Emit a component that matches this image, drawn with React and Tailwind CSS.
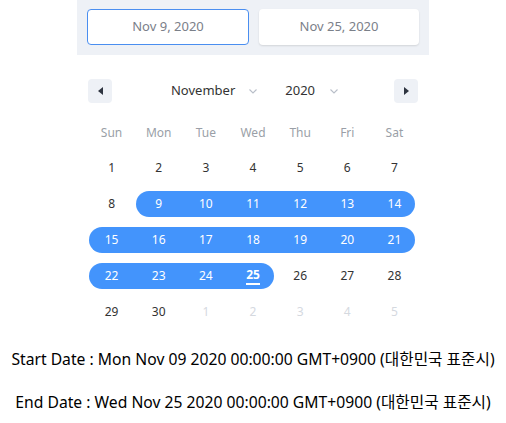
import React from "react";

const weekDays = ["Sun", "Mon", "Tue", "Wed", "Thu", "Fri", "Sat"];

const weeks = [
  [1, 2, 3, 4, 5, 6, 7],
  [8, 9, 10, 11, 12, 13, 14],
  [15, 16, 17, 18, 19, 20, 21],
  [22, 23, 24, 25, 26, 27, 28],
  [29, 30, 1, 2, 3, 4, 5],
];

const start = 9;
const end = 25;

function Chevron() {
  return (
    <svg width="12" height="12" viewBox="0 0 12 12" className="text-[#b8bec8]">
      <path d="M2.5 4.5 L6 8 L9.5 4.5" fill="none" stroke="currentColor" strokeWidth="1.1" />
    </svg>
  );
}

function Week({ days, row }) {
  const inRange = (d, i) => !(row === 4 && i > 1) && d >= start && d <= end;
  const idx = days.map((d, i) => (inRange(d, i) ? i : -1)).filter((i) => i >= 0);
  const first = idx.length ? idx[0] : -1;
  const last = idx.length ? idx[idx.length - 1] : -1;

  return (
    <div className="relative grid grid-cols-7 h-9 items-center">
      {first >= 0 && (
        <div
          className="absolute top-[5px] h-[26px] rounded-full bg-[#4394fc]"
          style={{
            left: `calc(${(first / 7) * 100}% + 1px)`,
            width: `calc(${((last - first + 1) / 7) * 100}% - 4px)`,
          }}
        />
      )}
      {days.map((d, i) => {
        const muted = row === 4 && i > 1;
        const sel = inRange(d, i);
        return (
          <div key={i} className="relative flex justify-center">
            <span
              className={
                d === end && sel
                  ? "text-white font-bold border-b-2 border-white leading-[16px]"
                  : sel
                  ? "text-white"
                  : muted
                  ? "text-[#d5d9df]"
                  : "text-[#333]"
              }
            >
              {d}
            </span>
          </div>
        );
      })}
    </div>
  );
}

export default function App() {
  return (
    <div className="w-[506px] h-[423px] bg-white font-['Noto_Sans','Noto_Sans_CJK_KR',sans-serif] flex flex-col items-center">
      <div className="w-[352px] h-[55px] bg-[#eef1f6] px-[10px] pt-[9px] flex gap-[10px]">
        <div className="flex-1 h-[36px] bg-white rounded-[4px] border border-[#4a8ef0] flex items-center justify-center text-[13px] text-[#7b8089]">
          Nov 9, 2020
        </div>
        <div className="flex-1 h-[36px] bg-white rounded-[4px] shadow-[0_1px_2px_rgba(0,0,0,0.12)] flex items-center justify-center text-[13px] text-[#7b8089]">
          Nov 25, 2020
        </div>
      </div>

      <div className="w-[352px] px-[11px] pt-[24px] text-[12px]">
        <div className="flex items-center h-[24px]">
          <div className="w-6 h-6 rounded-[4px] bg-[#eef1f6] flex items-center justify-center">
            <div className="w-0 h-0 border-y-[4px] border-y-transparent border-r-[5px] border-r-[#2e3440]" />
          </div>
          <div className="flex-1 flex items-center justify-center text-[13px] text-[#333]">
            <span className="ml-[5px]">November</span>
            <span className="ml-[12px]"><Chevron /></span>
            <span className="ml-[26px]">2020</span>
            <span className="ml-[13px]"><Chevron /></span>
          </div>
          <div className="w-6 h-6 rounded-[4px] bg-[#eef1f6] flex items-center justify-center">
            <div className="w-0 h-0 border-y-[4px] border-y-transparent border-l-[5px] border-l-[#2e3440]" />
          </div>
        </div>

        <div className="grid grid-cols-7 h-9 items-center mt-[12px] text-[#9a9fa7]">
          {weekDays.map((w) => (
            <div key={w} className="text-center">{w}</div>
          ))}
        </div>

        <div className="-mt-px">
          {weeks.map((days, r) => (
            <Week key={r} days={days} row={r} />
          ))}
        </div>
      </div>

      <div className="mt-[18px] text-[15.7px] text-black text-center leading-[22px] whitespace-nowrap">
        Start Date : Mon Nov 09 2020 00:00:00 GMT+0900 (대한민국 표준시)
      </div>
      <div className="mt-[21px] text-[15.7px] text-black text-center leading-[22px] whitespace-nowrap">
        End Date : Wed Nov 25 2020 00:00:00 GMT+0900 (대한민국 표준시)
      </div>
    </div>
  );
}
